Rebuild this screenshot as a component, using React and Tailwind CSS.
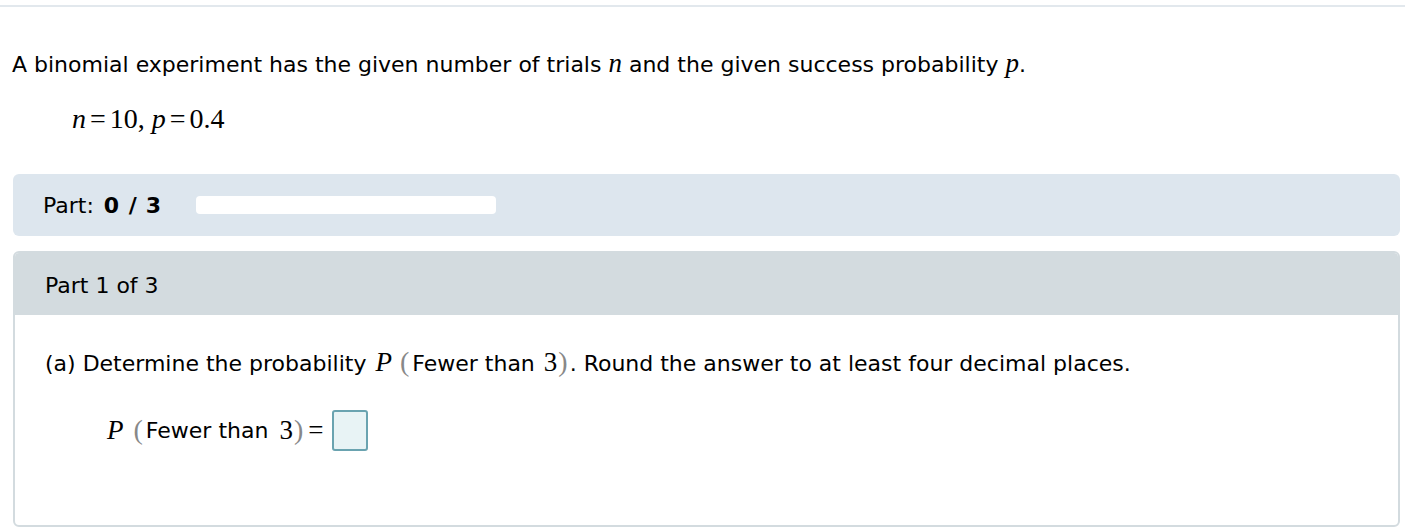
export default function App() {
  const sans = { fontFamily: '"DejaVu Sans", Verdana, sans-serif' };
  const serif = { fontFamily: '"Liberation Serif", "Times New Roman", serif' };
  return (
    <div className="w-[1405px] h-[528px] bg-white text-black overflow-hidden" style={sans}>
      <div className="h-[5px]" />
      <div className="h-[2px] bg-[#e2e8ed]" />
      <div className="pl-[12px] pt-[41px] text-[22px] leading-[30px]">
        A binomial experiment has the given number of trials{" "}
        <span className="italic text-[27px]" style={serif}>n</span> and the given success probability{" "}
        <span className="italic text-[27px]" style={serif}>p</span>.
      </div>
      <div className="pl-[72px] pt-[24px] text-[28px] leading-[30px]" style={serif}>
        <span className="italic">n</span>
        <span className="mx-[4px]">=</span>10,{" "}
        <span className="italic">p</span>
        <span className="mx-[4px]">=</span>0.4
      </div>
      <div className="px-[13px] pr-[5px] pt-[40px]">
        <div className="h-[62px] rounded-[6px] bg-[#dde6ee] flex items-center pl-[30px] text-[22px]">
          <span>Part:</span>
          <span className="font-bold ml-[10px] tracking-[0.5px]">0</span>
          <span className="font-bold ml-[9px]">/</span>
          <span className="font-bold ml-[9px]">3</span>
          <div className="ml-[35px] w-[300px] h-[18px] bg-white rounded-[4px]" />
        </div>
      </div>
      <div className="px-[13px] pr-[5px] pt-[15px]">
        <div className="rounded-[6px] border-2 border-[#d3dbdf] h-[276px] overflow-hidden">
          <div className="h-[62px] bg-[#d3dbdf] flex items-center pl-[30px] text-[22px] pt-[2px]">
            Part 1 of 3
          </div>
          <div className="pl-[30px] pt-[31px] text-[22px] leading-[32px]">
            (a) Determine the probability{" "}
            <span className="italic text-[27px] ml-[2px]" style={serif}>P</span>
            <span className="text-[#888] text-[28px] ml-[8px] mr-[3px]" style={serif}>(</span>Fewer than{" "}
            <span className="text-[27px] ml-[2px]" style={serif}>3</span>
            <span className="text-[#888] text-[28px] ml-[1px] mr-[2px]" style={serif}>)</span>. Round the answer to at least four decimal places.
          </div>
          <div className="pl-[92px] pt-[29px] flex items-center text-[22px]">
            <span className="italic text-[27px]" style={serif}>P</span>
            <span className="text-[#888] text-[28px] ml-[10px] mr-[3px]" style={serif}>(</span>
            <span>Fewer than</span>
            <span className="text-[27px] ml-[11px]" style={serif}>3</span>
            <span className="text-[#888] text-[28px] ml-[1px]" style={serif}>)</span>
            <span className="text-[27px] ml-[5px]" style={serif}>=</span>
            <div className="ml-[9px] w-[36px] h-[41px] rounded-[3px] border-2 border-[#6aa3b0] bg-[#e8f3f5]" />
          </div>
        </div>
      </div>
    </div>
  );
}
